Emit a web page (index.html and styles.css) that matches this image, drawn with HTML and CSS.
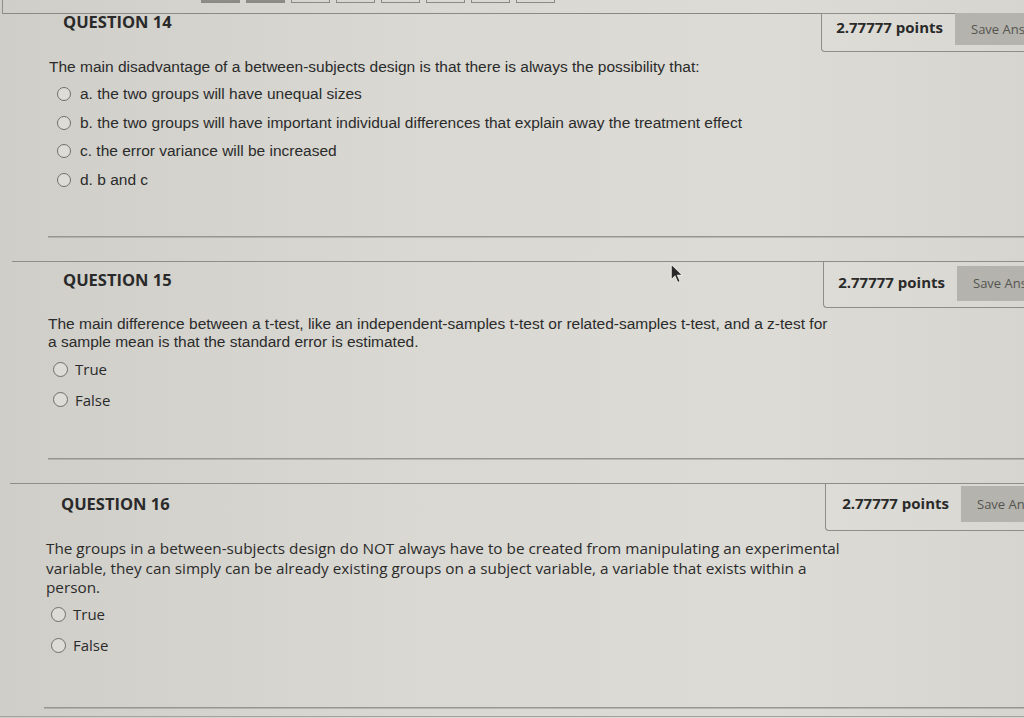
FILE: index.html
```html
<!DOCTYPE html>
<html lang="en">
<head>
<meta charset="utf-8">
<title>Test questions</title>
<link rel="stylesheet" href="styles.css">
</head>
<body>
<div class="page">
  <div class="topbar">
    <div class="tabs">
      <span class="tab tab-dark"></span><span class="tab tab-dark"></span><span class="tab"></span><span class="tab"></span><span class="tab"></span><span class="tab"></span><span class="tab"></span><span class="tab"></span>
    </div>
  </div>

  <section class="question q-first">
    <header class="q-head">
      <h2 class="q-title">QUESTION 14</h2>
      <div class="q-points">
        <span class="pts">2.77777 points</span>
        <button class="save" type="button">Save Answer</button>
      </div>
    </header>
    <p class="q-text">The main disadvantage of a between-subjects design is that there is always the possibility that:</p>
    <ul class="choices">
      <li class="choice"><span class="radio"></span><span>a. the two groups will have unequal sizes</span></li>
      <li class="choice"><span class="radio"></span><span>b. the two groups will have important individual differences that explain away the treatment effect</span></li>
      <li class="choice"><span class="radio"></span><span>c. the error variance will be increased</span></li>
      <li class="choice"><span class="radio"></span><span>d. b and c</span></li>
    </ul>
    <div class="sep"></div>
  </section>

  <section class="question q-second">
    <header class="q-head">
      <h2 class="q-title">QUESTION 15</h2>
      <div class="q-points">
        <span class="pts">2.77777 points</span>
        <button class="save" type="button">Save Answer</button>
      </div>
    </header>
    <p class="q-text">The main difference between a t-test, like an independent-samples t-test or related-samples t-test, and a z-test for a sample mean is that the standard error is estimated.</p>
    <ul class="choices tf">
      <li class="choice"><span class="radio"></span><span>True</span></li>
      <li class="choice"><span class="radio"></span><span>False</span></li>
    </ul>
    <div class="sep"></div>
  </section>

  <section class="question q-third">
    <header class="q-head">
      <h2 class="q-title">QUESTION 16</h2>
      <div class="q-points">
        <span class="pts">2.77777 points</span>
        <button class="save" type="button">Save Answer</button>
      </div>
    </header>
    <p class="q-text sans">The groups in a between-subjects design do NOT always have to be created from manipulating an experimental variable, they can simply can be already existing groups on a subject variable, a variable that exists within a person.</p>
    <ul class="choices tf">
      <li class="choice"><span class="radio"></span><span>True</span></li>
      <li class="choice"><span class="radio"></span><span>False</span></li>
    </ul>
    <div class="sep"></div>
    <div class="sep-bottom"></div>
  </section>

  <svg class="cursor" width="15" height="21" viewBox="0 0 14 20" aria-hidden="true">
    <path d="M1 1 L1 16 L4.6 12.6 L7.2 18.6 L9.6 17.6 L7 11.8 L12 11.8 Z" fill="#2a2a2a" stroke="#e8e8e4" stroke-width="1"/>
  </svg>
</div>
</body>
</html>
```

FILE: styles.css
```css
html, body {
  margin: 0;
  padding: 0;
}

body {
  width: 1024px;
  height: 718px;
  overflow: hidden;
  background: linear-gradient(90deg, #cfcec8 0%, #d9d8d2 40%, #dcdbd5 75%, #d6d5cf 100%);
  font-family: "Liberation Sans", Arial, sans-serif;
  color: #2b2b2b;
}

.page {
  position: relative;
  width: 1024px;
  height: 718px;
}

/* top strip */
.topbar {
  height: 13px;
  margin-left: 2px;
  border-left: 1px solid #8f8e89;
  border-bottom: 1px solid #8a8984;
}

.tabs {
  display: flex;
  gap: 6px;
  padding-left: 198px;
}

.tab {
  width: 37px;
  height: 2px;
  border: 1px solid #8a8984;
  border-top: none;
}

.tab-dark {
  background: #8d8c87;
}

/* question block */
.question {
  width: 1024px;
}

.q-head {
  display: flex;
  justify-content: space-between;
  align-items: flex-start;
}

.q-title {
  margin: 0;
  font-family: "Open Sans", sans-serif;
  font-weight: 700;
  font-size: 16.5px;
  line-height: 20px;
  color: #2a2a2a;
}

.q-points {
  display: flex;
  align-items: flex-start;
  gap: 12px;
  margin-right: -40px;
  padding-left: 14px;
  border-left: 1px solid #8e8d88;
  border-bottom: 1px solid #8e8d88;
  border-bottom-left-radius: 4px;
  background: rgba(255, 255, 255, 0.06);
}

.pts {
  font-family: "Open Sans", sans-serif;
  font-weight: 700;
  font-size: 15px;
  color: #2a2a2a;
  white-space: nowrap;
}

.save {
  width: 109px;
  padding: 0 0 0 16px;
  border: none;
  border-radius: 0;
  background: #b4b3ad;
  font-family: "Open Sans", sans-serif;
  font-size: 13px;
  color: #555550;
  text-align: left;
  white-space: nowrap;
  overflow: hidden;
}

.q-text {
  margin: 0;
  width: 790px;
  font-size: 15.5px;
  line-height: 18px;
  color: #2b2b2b;
}

.q-text.sans {
  width: 800px;
  font-family: "Open Sans", sans-serif;
  font-size: 15.3px;
  line-height: 19.5px;
}

.choices {
  list-style: none;
  margin: 0;
  padding: 0;
}

.choice {
  display: flex;
  align-items: center;
  gap: 9px;
  font-size: 15.5px;
}

.choices.tf .choice {
  font-family: "Open Sans", sans-serif;
  font-size: 15px;
  gap: 7px;
}

.radio {
  flex: none;
  width: 12px;
  height: 12px;
  border: 1.5px solid #6f6e6a;
  border-radius: 50%;
  background: #dedcd7;
}

.choices.tf .radio {
  width: 13px;
  height: 13px;
}

.sep {
  height: 1px;
  background: #98978f;
  box-shadow: 0 1px 0 rgba(120, 119, 112, 0.35);
}

/* Q14: partially scrolled up */
.q-first .q-title {
  margin-left: 63px;
  line-height: 16px;
}

.q-first .q-points {
  height: 38px;
  margin-top: -1px;
}

.q-first .pts {
  line-height: 20px;
  padding-top: 4px;
}

.q-first .save {
  height: 32px;
  line-height: 30px;
}

.q-first .q-text {
  margin: 6px 0 0 49px;
}

.q-first .choices {
  margin: 4px 0 0 57px;
}

.q-first .choice {
  height: 28.5px;
}

.q-first .sep {
  margin: 42px 0 0 48px;
}

/* Q15 */
.q-second {
  margin-top: 24px;
  margin-left: 12px;
  width: 1012px;
  border-top: 1px solid #8e8d88;
}

.q-second .q-title {
  margin: 8px 0 0 51px;
}

.q-second .q-points {
  height: 45px;
  margin-right: -42px;
}

.q-second .pts {
  line-height: 20px;
  padding-top: 10px;
}

.q-second .save {
  height: 35px;
  margin-top: 4px;
  line-height: 35px;
}

.q-second .q-text {
  margin: 7px 0 0 36px;
}

.q-second .choices {
  margin: 3px 0 0 41px;
}

.q-second .choice {
  height: 30.5px;
}

.q-second .sep {
  margin: 43px 0 0 36px;
}

/* Q16 */
.q-third {
  margin-top: 24px;
  margin-left: 10px;
  width: 1014px;
  border-top: 1px solid #8e8d88;
}

.q-third .q-title {
  margin: 10px 0 0 51px;
}

.q-third .q-points {
  height: 46px;
  padding-left: 16px;
  margin-right: -46px;
}

.q-third .pts {
  line-height: 20px;
  padding-top: 9px;
}

.q-third .save {
  height: 36px;
  margin-top: 2px;
  line-height: 36px;
}

.q-third .q-text {
  margin: 8px 0 0 36px;
}

.q-third .choices {
  margin: 1px 0 0 41px;
}

.q-third .choice {
  height: 31px;
}

.q-third .sep {
  margin: 46px 0 0 34px;
}

.sep-bottom {
  height: 1px;
  margin: 8px 0 0 -10px;
  background: #a3a29b;
}

/* mouse pointer over the page */
.cursor {
  position: absolute;
  left: 670px;
  top: 263px;
}
```
